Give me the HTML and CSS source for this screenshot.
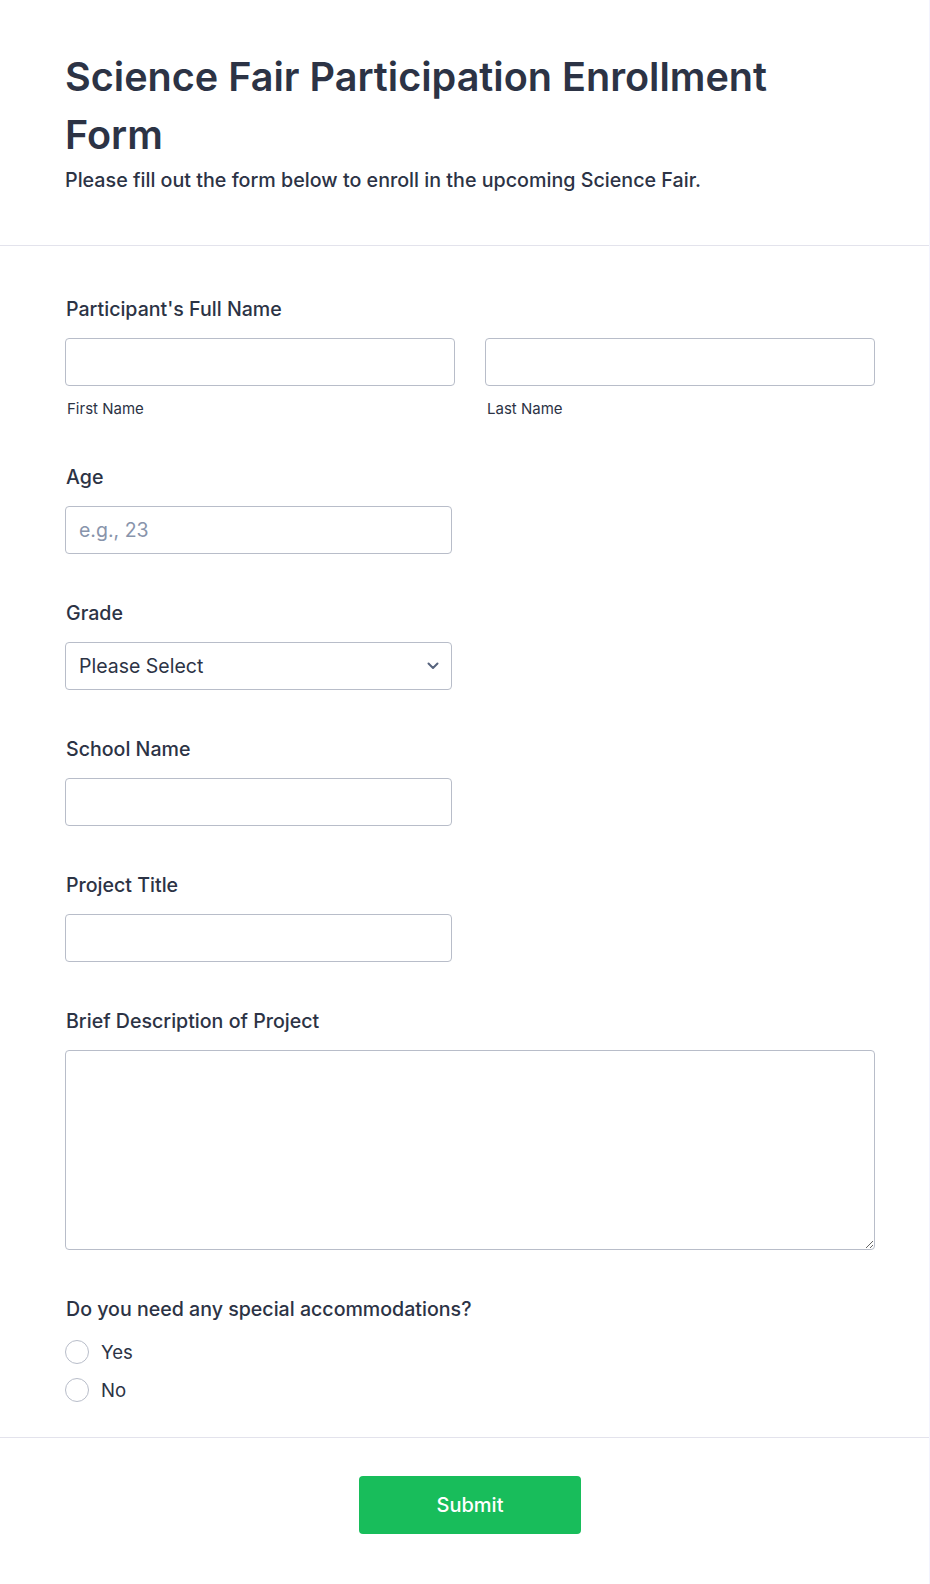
FILE: index.html
```html
<!DOCTYPE html>
<html lang="en">

<head>
    <meta charset="UTF-8">
    <meta name="viewport" content="width=device-width, initial-scale=1.0">
    <title>Science Fair Participation Enrollment Form</title>
    <link rel="stylesheet" href="styles.css">
</head>

<body>
    <form class="form">
        <div class="form-header">
            <h1 class="form-title">Science Fair Participation Enrollment Form</h1>
            <p class="form-subtitle">Please fill out the form below to enroll in the upcoming Science Fair.</p>
        </div>

        <div class="form-body">
            <div class="field">
                <label class="field-label">Participant's Full Name</label>
                <div class="name-row">
                    <div class="name-part">
                        <input type="text" class="text-input">
                        <span class="sublabel">First Name</span>
                    </div>
                    <div class="name-part">
                        <input type="text" class="text-input">
                        <span class="sublabel">Last Name</span>
                    </div>
                </div>
            </div>

            <div class="field">
                <label class="field-label">Age</label>
                <input type="text" class="text-input half" placeholder="e.g., 23">
            </div>

            <div class="field">
                <label class="field-label">Grade</label>
                <div class="select-wrap half">
                    <select class="select-input">
                        <option>Please Select</option>
                    </select>
                    <svg class="chevron" width="12" height="8" viewBox="0 0 12 8">
                        <path d="M1.5 1.5 L6 6 L10.5 1.5" fill="none" stroke="#57647e" stroke-width="2" stroke-linecap="round" stroke-linejoin="round"/>
                    </svg>
                </div>
            </div>

            <div class="field">
                <label class="field-label">School Name</label>
                <input type="text" class="text-input half">
            </div>

            <div class="field">
                <label class="field-label">Project Title</label>
                <input type="text" class="text-input half">
            </div>

            <div class="field description">
                <label class="field-label">Brief Description of Project</label>
                <textarea class="text-area"></textarea>
            </div>

            <div class="field last">
                <label class="field-label">Do you need any special accommodations?</label>
                <div class="radio-list">
                    <label class="radio-option"><input type="radio" name="accommodations"><span>Yes</span></label>
                    <label class="radio-option"><input type="radio" name="accommodations"><span>No</span></label>
                </div>
            </div>
        </div>

        <div class="form-footer">
            <button type="submit" class="submit-button">Submit</button>
        </div>
    </form>
</body>

</html>
```

FILE: styles.css
```css
body {
    margin: 0;
    background: #f3f3fe;
    font-family: Inter, "Noto Sans", sans-serif;
    color: #2c3345;
}

.form {
    width: 929px;
    min-height: 1584px;
    background: #fff;
}

.form-header {
    padding: 48px 55px 51px 65px;
    border-bottom: 1px solid #e3e3ec;
}

.form-title {
    margin: 0;
    font-size: 39.6px;
    line-height: 58px;
    font-weight: 600;
    color: #2c3345;
}

.form-subtitle {
    margin: 2px 0 0;
    font-size: 19.7px;
    line-height: 28px;
    font-weight: 500;
}

.form-body {
    padding: 51px 54px 0 65px;
    border-bottom: 1px solid #e3e3ec;
}

.field {
    display: flex;
    flex-direction: column;
    margin-bottom: 47px;
}

.field.last {
    margin-bottom: 35px;
}

.field-label {
    display: block;
    font-size: 19.6px;
    line-height: 24px;
    font-weight: 500;
    margin: 0 0 17px 1px;
}

.last .field-label {
    margin-bottom: 19px;
}

.name-row {
    display: flex;
    gap: 30px;
}

.name-part {
    flex: 1;
    display: flex;
    flex-direction: column;
}

.sublabel {
    margin: 14px 0 0 2px;
    font-size: 15px;
    line-height: 18px;
}

.text-input,
.select-input {
    box-sizing: border-box;
    height: 48px;
    width: 100%;
    border: 1px solid #b8bdc9;
    border-radius: 4px;
    padding: 0 13px;
    font-family: inherit;
    font-size: 19.5px;
    color: #2c3345;
    background: #fff;
}

.text-input::placeholder {
    color: #8894ab;
}

.half {
    width: 387px;
}

.select-wrap {
    position: relative;
}

.select-input {
    appearance: none;
    -webkit-appearance: none;
}

.chevron {
    position: absolute;
    right: 13px;
    top: 20px;
    pointer-events: none;
}

.text-area {
    box-sizing: border-box;
    height: 200px;
    width: 100%;
    border: 1px solid #b8bdc9;
    border-radius: 4px;
    font-family: inherit;
    font-size: 18px;
}

.radio-list {
    display: flex;
    flex-direction: column;
    gap: 14px;
}

.radio-option {
    display: flex;
    align-items: center;
    gap: 12px;
    font-size: 18.6px;
    line-height: 24px;
}

.radio-option input {
    appearance: none;
    -webkit-appearance: none;
    box-sizing: border-box;
    width: 24px;
    height: 24px;
    margin: 0;
    border: 1px solid #b8bdc9;
    border-radius: 50%;
    background: #fff;
}

.form-footer {
    display: flex;
    justify-content: center;
    padding: 38px 54px 0 65px;
}

.submit-button {
    width: 222px;
    height: 58px;
    border: none;
    border-radius: 4px;
    background: #18bd5b;
    color: #fff;
    font-family: inherit;
    font-size: 20px;
    font-weight: 500;
}
```
